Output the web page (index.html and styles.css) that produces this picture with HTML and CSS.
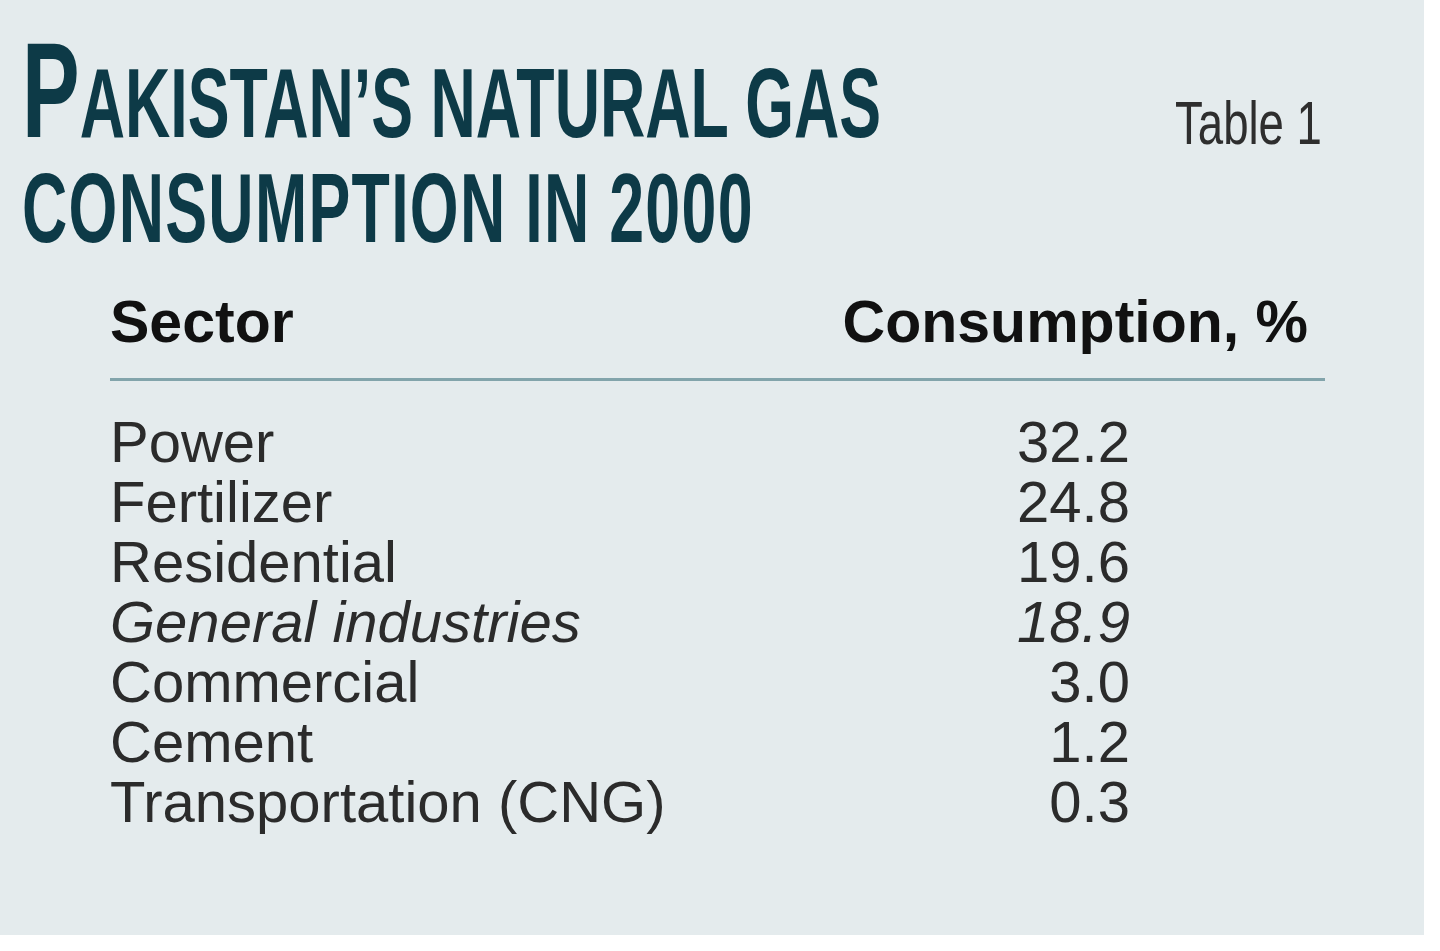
FILE: index.html
```html
<!DOCTYPE html>
<html lang="en">
<head>
<meta charset="utf-8">
<title>Pakistan's natural gas consumption in 2000</title>
<link rel="stylesheet" href="styles.css">
</head>
<body>
<div class="panel">
  <div class="head">
    <div class="title">
      <div class="title-line"><span class="title-text"><span class="big">P</span>AKISTAN’S NATURAL GAS</span></div>
      <div class="title-line"><span class="title-text line2">CONSUMPTION IN 2000</span></div>
    </div>
    <div class="label"><span class="label-text">Table 1</span></div>
  </div>
  <div class="table">
    <div class="thead">
      <span class="th">Sector</span>
      <span class="th th-num">Consumption, %</span>
    </div>
    <div class="tbody">
      <div class="row"><span class="name">Power</span><span class="val">32.2</span></div>
      <div class="row"><span class="name">Fertilizer</span><span class="val">24.8</span></div>
      <div class="row"><span class="name">Residential</span><span class="val">19.6</span></div>
      <div class="row italic"><span class="name">General industries</span><span class="val">18.9</span></div>
      <div class="row"><span class="name">Commercial</span><span class="val">3.0</span></div>
      <div class="row"><span class="name">Cement</span><span class="val">1.2</span></div>
      <div class="row"><span class="name">Transportation (CNG)</span><span class="val">0.3</span></div>
    </div>
  </div>
</div>
</body>
</html>
```
FILE: styles.css
```css
html, body {
  margin: 0;
  padding: 0;
  background: #ffffff;
}

.panel {
  width: 1424px;
  height: 935px;
  box-sizing: border-box;
  padding-top: 51px;
  background: #e4ebed;
  font-family: "Liberation Sans", Arial, sans-serif;
  overflow: hidden;
}

.head {
  display: flex;
  align-items: flex-start;
  padding-left: 22px;
  padding-right: 99px;
}

.title {
  flex: 1;
  min-width: 0;
  color: #0d3a47;
  font-weight: 700;
  font-size: 98px;
}

.title-line {
  height: 105px;
  line-height: 105px;
  white-space: nowrap;
}

.title-text {
  display: inline-block;
  transform: scaleX(0.64);
  transform-origin: left center;
}

.title-text.line2 {
  letter-spacing: 2px;
}

.big {
  font-size: 135px;
  line-height: 0;
}

.label {
  margin-top: 41px;
  color: #2e2e2e;
  font-size: 62px;
  line-height: 62px;
  white-space: nowrap;
  width: 150px;
}

.label-text {
  display: inline-block;
  transform: scaleX(0.735);
  transform-origin: left center;
}

.table {
  margin-left: 110px;
  width: 1215px;
  margin-top: 31px;
}

.thead {
  display: flex;
  justify-content: space-between;
  font-size: 59px;
  line-height: 60px;
  font-weight: 700;
  color: #111111;
  padding-bottom: 26px;
  border-bottom: 3px solid #82a4ab;
}

.th-num {
  margin-right: 17px;
}

.tbody {
  padding-top: 31px;
}

.row {
  display: flex;
  justify-content: space-between;
  font-size: 58px;
  line-height: 60px;
  color: #2b2b2b;
}

.row .val {
  margin-right: 195px;
}

.italic {
  font-style: italic;
}
```
